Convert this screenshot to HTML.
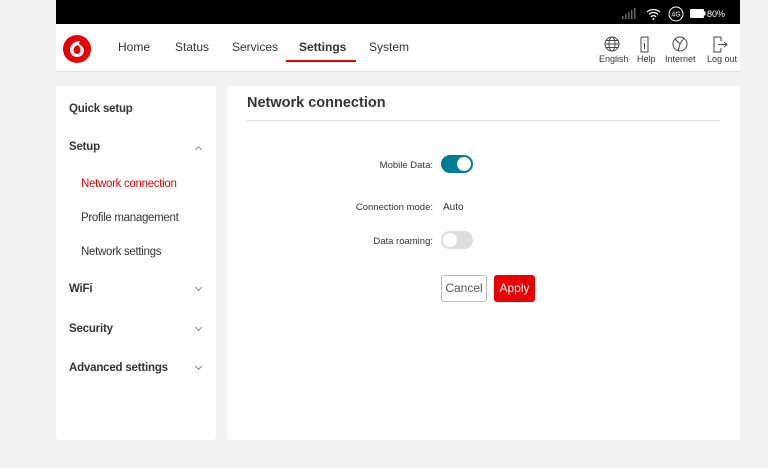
<!DOCTYPE html>
<html><head><style>
*{margin:0;padding:0;box-sizing:border-box}
body{width:768px;height:468px;background:#f2f2f2;font-family:"Liberation Sans",sans-serif;position:relative;overflow:hidden;color:#333}
.abs{position:absolute}
.top{left:56px;top:0;width:684px;height:24px;background:#000}
.hdr{left:56px;top:24px;width:684px;height:48px;background:#fff;border-bottom:1px solid #e0e0e0}
.nav{font-size:12px;color:#333;top:40px}
.ic{font-size:9px;color:#333;top:54px}
.side{left:56px;top:86px;width:160px;height:354px;background:#fff;border-radius:3px}
.main{left:227px;top:86px;width:513px;height:354px;background:#fff;border-radius:3px}
.s{font-size:11.5px;font-weight:bold;color:#333;left:69px;letter-spacing:-0.2px}
.ss{font-size:11.5px;color:#333;left:81px;letter-spacing:-0.3px}
.chev{left:196px;width:5px;height:5px;border-right:1px solid #888;border-bottom:1px solid #888}
.lbl{font-size:9.5px;color:#333;text-align:right;right:335px}
</style></head><body>
<div class="abs top"></div>
<svg class="abs" style="left:620px;top:4px" width="130" height="18">
<rect x="2" y="12" width="1.5" height="3" fill="#666"/><rect x="5" y="10" width="1.5" height="5" fill="#666"/><rect x="8" y="8" width="1.5" height="7" fill="#666"/><rect x="11" y="6" width="1.5" height="9" fill="#666"/><rect x="14" y="4" width="1.5" height="11" fill="#666"/>
<path d="M27 8a10 10 0 0 1 13 0M29 10.5a6 6 0 0 1 9 0M31 13a3 3 0 0 1 5 0" stroke="#fff" stroke-width="1.3" fill="none"/><circle cx="33.5" cy="15" r="1" fill="#fff"/>
<circle cx="56" cy="10" r="7" stroke="#fff" fill="none"/><text x="56" y="12.5" font-size="7" fill="#fff" text-anchor="middle" font-family="Liberation Sans">4G</text>
<rect x="70" y="5" width="14" height="9" rx="1" fill="#fff"/><rect x="84" y="7.5" width="1.5" height="4" fill="#fff"/>
<text x="87" y="13" font-size="9" fill="#fff" font-family="Liberation Sans">80%</text>
</svg>
<div class="abs hdr"></div>
<svg class="abs" style="left:62px;top:34px" width="30" height="30"><circle cx="15" cy="15" r="14" fill="#e60000"/><path d="M17 7c-5 0.5-9 4-9 9 0 4 3 7 7 7s7-3 7-6.5c0-3.5-3-5-5-6.5 0-1.5 0.5-2.5 1.5-3z" fill="#fff"/><path d="M15.5 11c2 1.5 3 3 3 5.5 0 2-1.5 3.5-3.5 3.5s-3.5-2-3.5-4c0-2 1.5-4 4-5z" fill="#e60000"/></svg>
<div class="abs nav" style="left:118px">Home</div>
<div class="abs nav" style="left:175px">Status</div>
<div class="abs nav" style="left:232px">Services</div>
<div class="abs nav" style="left:299px;font-weight:bold">Settings</div>
<div class="abs" style="left:286px;top:60px;width:70px;height:2px;background:#e60000"></div>
<div class="abs nav" style="left:369px">System</div>
<svg class="abs" style="left:600px;top:35px" width="140" height="18" fill="none" stroke="#444" stroke-width="1">
<circle cx="12" cy="9" r="7"/><ellipse cx="12" cy="9" rx="3" ry="7"/><path d="M5 9h14M6 5.5h12M6 12.5h12"/>
<path d="M42 2h6v15h-7V3zM44.5 8v6M44.5 5.5v.8"/>
<circle cx="80" cy="9" r="7"/><path d="M75 4l5 5 4 -6M80 9l-2 7"/>
<path d="M121 2h-7v15h7M118 9.5h9M124 7l3 2.5-3 2.5M121 2v4M121 13v4"/>
</svg>
<div class="abs ic" style="left:599px">English</div>
<div class="abs ic" style="left:637px">Help</div>
<div class="abs ic" style="left:665px">Internet</div>
<div class="abs ic" style="left:707px">Log out</div>
<div class="abs side"></div>
<div class="abs s" style="top:103px">Quick setup</div>
<div class="abs s" style="top:141px">Setup</div>
<div class="abs chev" style="top:147px;transform:rotate(-135deg)"></div>
<div class="abs ss" style="top:178px;color:#e60000">Network connection</div>
<div class="abs ss" style="top:212px">Profile management</div>
<div class="abs ss" style="top:246px">Network settings</div>
<div class="abs s" style="top:283px">WiFi</div>
<div class="abs chev" style="top:285px;transform:rotate(45deg)"></div>
<div class="abs s" style="top:323px">Security</div>
<div class="abs chev" style="top:325px;transform:rotate(45deg)"></div>
<div class="abs s" style="top:362px">Advanced settings</div>
<div class="abs chev" style="top:364px;transform:rotate(45deg)"></div>
<div class="abs main"></div>
<div class="abs" style="left:247px;top:95px;font-size:14.5px;font-weight:bold;color:#333">Network connection</div>
<div class="abs" style="left:247px;top:120px;width:473px;height:1px;background:#ddd"></div>
<div class="abs lbl" style="top:160px">Mobile Data:</div>
<div class="abs" style="left:441px;top:155px;width:32px;height:18px;border-radius:9px;background:#007c92"></div>
<div class="abs" style="left:457px;top:157px;width:14px;height:14px;border-radius:7px;background:#fff"></div>
<div class="abs lbl" style="top:202px">Connection mode:</div>
<div class="abs" style="left:443px;top:202px;font-size:10px">Auto</div>
<div class="abs lbl" style="top:236px">Data roaming:</div>
<div class="abs" style="left:441px;top:231px;width:32px;height:18px;border-radius:9px;background:#ddd"></div>
<div class="abs" style="left:443px;top:233px;width:14px;height:14px;border-radius:7px;background:#fff"></div>
<div class="abs" style="left:441px;top:275px;width:46px;height:27px;border:1px solid #bbb;border-radius:3px;font-size:12px;color:#555;text-align:center;line-height:25px">Cancel</div>
<div class="abs" style="left:494px;top:275px;width:41px;height:27px;background:#e60000;border-radius:3px;font-size:12px;color:#fff;text-align:center;line-height:27px">Apply</div>
</body></html>
